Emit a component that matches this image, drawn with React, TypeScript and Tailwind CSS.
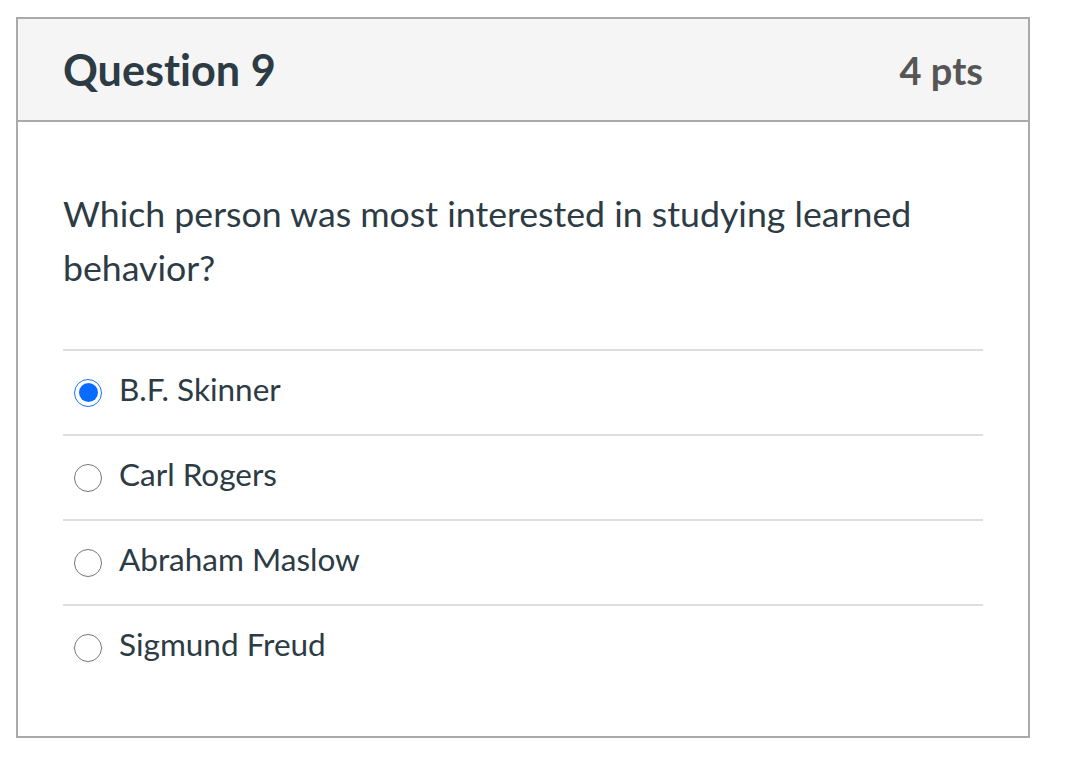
import React from "react";

const answers = ["B.F. Skinner", "Carl Rogers", "Abraham Maslow", "Sigmund Freud"];

function Radio({ checked }: { checked: boolean }) {
  if (checked) {
    return (
      <span className="flex h-[28px] w-[28px] shrink-0 translate-y-[3px] items-center justify-center rounded-full border border-[#1a73e8] bg-white">
        <span className="h-[19px] w-[19px] rounded-full bg-[#0a6cff]" />
      </span>
    );
  }
  return <span className="h-[28px] w-[28px] shrink-0 translate-y-[3px] rounded-full border border-[#767676] bg-white" />;
}

export default function App() {
  return (
    <div
      className="min-h-[766px] w-[1080px] bg-white pt-[17px] pl-[16px]"
      style={{ fontFamily: "Lato, 'Noto Sans', sans-serif", fontVariantLigatures: "none" }}
    >
      <div className="w-[1014px] border-2 border-[#aaaaaa] bg-white">
        <div className="flex h-[103px] items-center justify-between border-b-2 border-[#aaaaaa] bg-[#f5f5f5] px-[45px]">
          <h2 className="text-[43.2px] font-bold leading-none text-[#2d3b45]">Question 9</h2>
          <span className="text-[38px] font-bold leading-none text-[#565656]">4 pts</span>
        </div>
        <div className="px-[45px] pt-[65px] pb-[47px]">
          <p className="text-[35.7px] leading-[54px] text-[#2d3b45]">
            Which person was most interested in studying learned behavior?
          </p>
          <div className="mt-[54px]">
            {answers.map((a, i) => (
              <div key={a} className="flex h-[85px] items-center gap-[17px] border-t-2 border-[#dddddd] pb-[6px] pl-[11px]">
                <Radio checked={i === 0} />
                <span className="text-[31.5px] leading-none text-[#2d3b45]">{a}</span>
              </div>
            ))}
          </div>
        </div>
      </div>
    </div>
  );
}
